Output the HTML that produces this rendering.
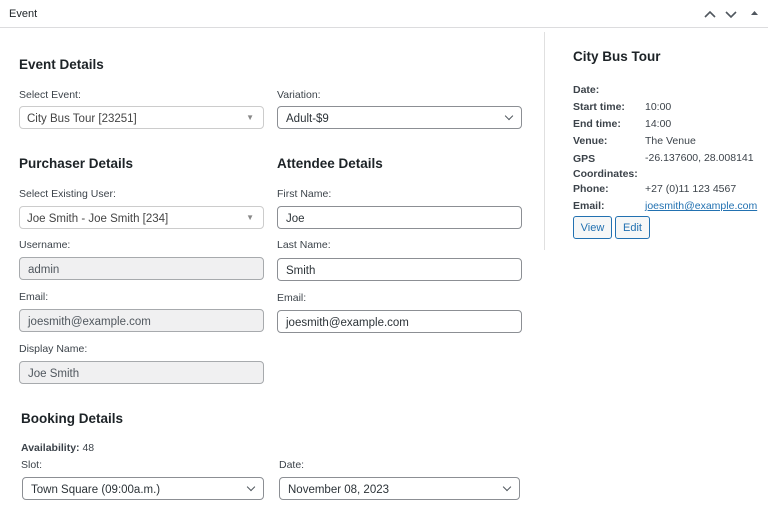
<!DOCTYPE html>
<html><head><style>
*{box-sizing:border-box;margin:0;padding:0}
body{width:768px;height:521px;background:#fff;font-family:"Liberation Sans",sans-serif;color:#1d2327;position:relative;overflow:hidden;font-size:11px}
.a{position:absolute}
.h{font-size:13.5px;font-weight:bold;color:#1d2327}
.l{font-size:10.5px;color:#3c434a}
.box{position:absolute;height:23px;border:1px solid #8c8f94;border-radius:4px;background:#fff;font-size:11.5px;line-height:22px;padding-top:1px;padding-left:8px;color:#2c3338}
.s2{border-color:#ccc;color:#444;padding-left:7px}
.g{background:#f0f0f1;border-color:#a7aaad;color:#50575e}
.car{position:absolute;right:9px;top:0;font-size:8px;color:#888}
.chev{position:absolute;right:9px;top:6px;width:6px;height:6px;border-right:1.3px solid #50575e;border-bottom:1.3px solid #50575e;transform:rotate(45deg)}
.rl{position:absolute;left:573px;font-size:10.5px;font-weight:bold;color:#3c434a}
.rv{position:absolute;left:645px;font-size:10.5px;color:#3c434a}
.btn{position:absolute;top:216px;height:23px;border:1px solid #2271b1;border-radius:3px;background:#f6f7f7;color:#2271b1;font-size:11px;line-height:22px;text-align:center}
</style></head><body>
<div class="a" style="left:9px;top:8px;font-size:11px;color:#1d2327">Event</div>
<svg class="a" style="left:703px;top:8px" width="64" height="12"><path d="M2 9 L7 4 L12 9" fill="none" stroke="#50575e" stroke-width="1.6"/><path d="M23 4 L28 9 L33 4" fill="none" stroke="#50575e" stroke-width="1.6"/><path d="M48 7 L51.5 3 L55 7Z" fill="#50575e"/></svg>
<div class="a" style="left:0;top:27px;width:768px;height:1px;background:#dcdcde"></div>
<div class="a" style="left:544px;top:32px;width:1px;height:218px;background:#e0e0e0"></div>

<div class="a h" style="left:19px;top:57px">Event Details</div>
<div class="a l" style="left:19px;top:89px">Select Event:</div>
<div class="box s2" style="left:19px;top:106px;width:245px">City Bus Tour [23251]<span class="car">▼</span></div>
<div class="a l" style="left:277px;top:89px">Variation:</div>
<div class="box" style="left:277px;top:106px;width:245px">Adult-$9<span class="chev"></span></div>

<div class="a h" style="left:19px;top:156px">Purchaser Details</div>
<div class="a l" style="left:19px;top:188px">Select Existing User:</div>
<div class="box s2" style="left:19px;top:206px;width:245px">Joe Smith - Joe Smith [234]<span class="car">▼</span></div>
<div class="a l" style="left:19px;top:239px">Username:</div>
<div class="box g" style="left:19px;top:257px;width:245px">admin</div>
<div class="a l" style="left:19px;top:291px">Email:</div>
<div class="box g" style="left:19px;top:309px;width:245px">joesmith@example.com</div>
<div class="a l" style="left:19px;top:343px">Display Name:</div>
<div class="box g" style="left:19px;top:361px;width:245px">Joe Smith</div>

<div class="a h" style="left:277px;top:156px">Attendee Details</div>
<div class="a l" style="left:277px;top:188px">First Name:</div>
<div class="box" style="left:277px;top:206px;width:245px">Joe</div>
<div class="a l" style="left:277px;top:239px">Last Name:</div>
<div class="box" style="left:277px;top:258px;width:245px">Smith</div>
<div class="a l" style="left:277px;top:292px">Email:</div>
<div class="box" style="left:277px;top:310px;width:245px">joesmith@example.com</div>

<div class="a h" style="left:21px;top:411px">Booking Details</div>
<div class="a l" style="left:21px;top:442px"><b>Availability:</b> 48</div>
<div class="a l" style="left:21px;top:459px">Slot:</div>
<div class="box" style="left:22px;top:477px;width:242px">Town Square (09:00a.m.)<span class="chev"></span></div>
<div class="a l" style="left:279px;top:459px">Date:</div>
<div class="box" style="left:279px;top:477px;width:241px">November 08, 2023<span class="chev"></span></div>

<div class="a" style="left:573px;top:49px;font-size:13.5px;font-weight:bold">City Bus Tour</div>
<div class="rl" style="top:84px">Date:</div>
<div class="rl" style="top:101px">Start time:</div><div class="rv" style="top:101px">10:00</div>
<div class="rl" style="top:118px">End time:</div><div class="rv" style="top:118px">14:00</div>
<div class="rl" style="top:135px">Venue:</div><div class="rv" style="top:135px">The Venue</div>
<div class="rl" style="top:152px;line-height:15px">GPS<br>Coordinates:</div><div class="rv" style="top:152px">-26.137600, 28.008141</div>
<div class="rl" style="top:183px">Phone:</div><div class="rv" style="top:183px">+27 (0)11 123 4567</div>
<div class="rl" style="top:200px">Email:</div><div class="rv" style="top:200px;color:#2271b1;text-decoration:underline">joesmith@example.com</div>
<div class="btn" style="left:573px;width:39px">View</div>
<div class="btn" style="left:615px;width:35px">Edit</div>
</body></html>
